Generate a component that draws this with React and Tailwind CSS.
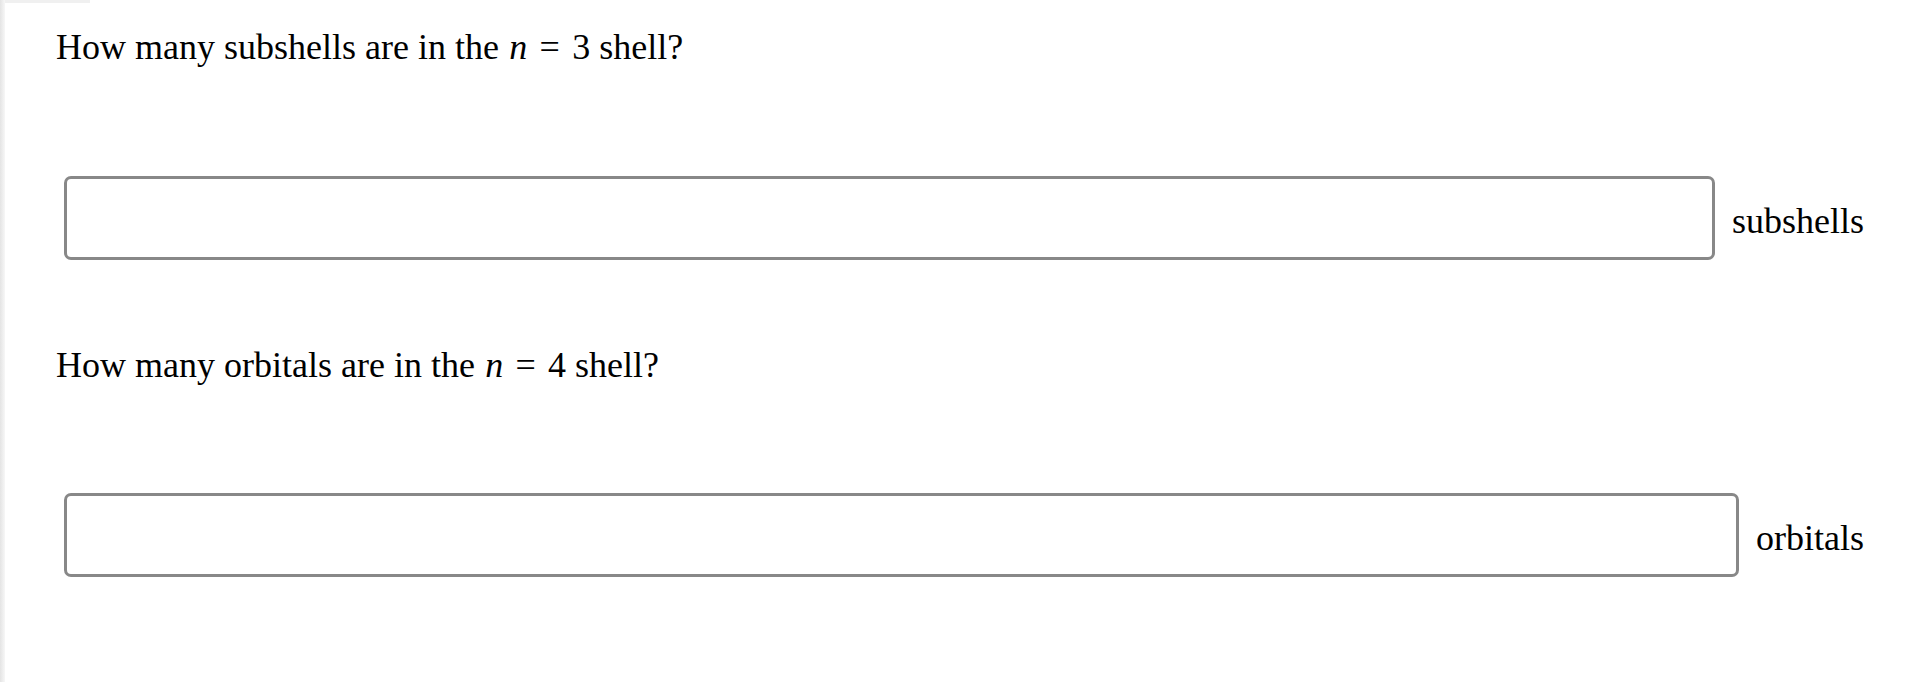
import React from "react";

const Math = ({ n }) => (
  <span className="ml-[0.04em] whitespace-nowrap">
    <i>n</i>
    <span className="mx-[0.34em]">=</span>
    {n}
  </span>
);

const Question = ({ children }) => (
  <p className="pl-[56px] text-[36px] leading-[43px] text-black">{children}</p>
);

const AnswerRow = ({ unit }) => (
  <div className="flex items-center pl-[64px] pr-[42px]">
    <input
      type="text"
      className="h-[84px] min-w-0 flex-1 rounded-[7px] border-[3px] border-[#888888] bg-white px-3 text-[36px] outline-none"
    />
    <span className="ml-[17px] pt-[6px] text-[36px] leading-[43px] text-black">{unit}</span>
  </div>
);

export default function App() {
  return (
    <div
      className="flex h-[682px] w-full bg-white"
      style={{ fontFamily: '"Liberation Serif", "Times New Roman", serif' }}
    >
      <div className="w-[5px] shrink-0 bg-gradient-to-r from-[#e4e4e4] to-[#f7f7f7]" />
      <div className="relative flex-1 pt-[26px]">
        <div className="absolute left-0 top-0 h-[3px] w-[85px] bg-[#f0f0f0]" />
        <div className="-ml-[5px]">
          <Question>
            How many subshells are in the <Math n="3" /> shell?
          </Question>
          <div className="mt-[107px]">
            <AnswerRow unit="subshells" />
          </div>
          <div className="mt-[84px]">
            <Question>
              How many orbitals are in the <Math n="4" /> shell?
            </Question>
          </div>
          <div className="mt-[106px]">
            <AnswerRow unit="orbitals" />
          </div>
        </div>
      </div>
    </div>
  );
}
